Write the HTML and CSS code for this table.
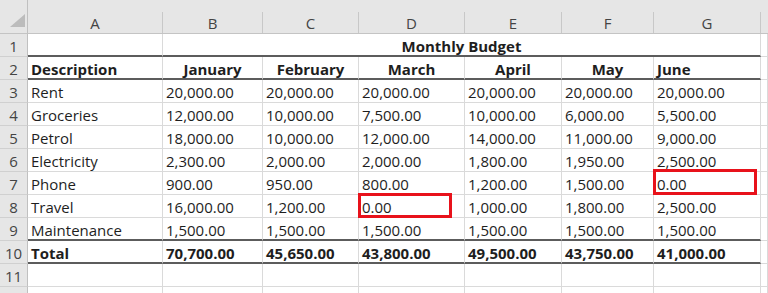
FILE: index.html
```html
<!DOCTYPE html>
<html>
<head>
<meta charset="utf-8">
<link rel="stylesheet" href="styles.css">
</head>
<body>
<div class="sheet">
  <div class="ch corner"><span class="tri"></span></div>
  <div class="ch"><span class="lbl">A</span></div>
  <div class="ch"><span class="lbl">B</span></div>
  <div class="ch"><span class="lbl">C</span></div>
  <div class="ch"><span class="lbl">D</span></div>
  <div class="ch"><span class="lbl">E</span></div>
  <div class="ch"><span class="lbl">F</span></div>
  <div class="ch"><span class="lbl">G</span></div>
  <div class="ch"><span class="lbl last"></span></div>

  <div class="rh">1</div>
  <div class="c thick"></div>
  <div class="c thick b merged">Monthly Budget</div>
  <div class="c"></div>

  <div class="rh">2</div>
  <div class="c thick b">Description</div>
  <div class="c thick b ctr">January</div>
  <div class="c thick b ctr">February</div>
  <div class="c thick b ctr">March</div>
  <div class="c thick b ctr">April</div>
  <div class="c thick b ctr">May</div>
  <div class="c thick b">June</div>
  <div class="c"></div>

  <div class="rh">3</div>
  <div class="c">Rent</div><div class="c">20,000.00</div><div class="c">20,000.00</div><div class="c">20,000.00</div><div class="c">20,000.00</div><div class="c">20,000.00</div><div class="c">20,000.00</div><div class="c"></div>

  <div class="rh">4</div>
  <div class="c">Groceries</div><div class="c">12,000.00</div><div class="c">10,000.00</div><div class="c">7,500.00</div><div class="c">10,000.00</div><div class="c">6,000.00</div><div class="c">5,500.00</div><div class="c"></div>

  <div class="rh">5</div>
  <div class="c">Petrol</div><div class="c">18,000.00</div><div class="c">10,000.00</div><div class="c">12,000.00</div><div class="c">14,000.00</div><div class="c">11,000.00</div><div class="c">9,000.00</div><div class="c"></div>

  <div class="rh">6</div>
  <div class="c">Electricity</div><div class="c">2,300.00</div><div class="c">2,000.00</div><div class="c">2,000.00</div><div class="c">1,800.00</div><div class="c">1,950.00</div><div class="c">2,500.00</div><div class="c"></div>

  <div class="rh">7</div>
  <div class="c">Phone</div><div class="c">900.00</div><div class="c">950.00</div><div class="c">800.00</div><div class="c">1,200.00</div><div class="c">1,500.00</div><div class="c hl">0.00<span class="mark mark-g"></span></div><div class="c"></div>

  <div class="rh">8</div>
  <div class="c">Travel</div><div class="c">16,000.00</div><div class="c">1,200.00</div><div class="c hl">0.00<span class="mark mark-d"></span></div><div class="c">1,000.00</div><div class="c">1,800.00</div><div class="c">2,500.00</div><div class="c"></div>

  <div class="rh">9</div>
  <div class="c thick">Maintenance</div><div class="c thick">1,500.00</div><div class="c thick">1,500.00</div><div class="c thick">1,500.00</div><div class="c thick">1,500.00</div><div class="c thick">1,500.00</div><div class="c thick">1,500.00</div><div class="c"></div>

  <div class="rh">10</div>
  <div class="c thick b">Total</div><div class="c thick b">70,700.00</div><div class="c thick b">45,650.00</div><div class="c thick b">43,800.00</div><div class="c thick b">49,500.00</div><div class="c thick b">43,750.00</div><div class="c thick b">41,000.00</div><div class="c"></div>

  <div class="rh">11</div>
  <div class="c"></div><div class="c"></div><div class="c"></div><div class="c"></div><div class="c"></div><div class="c"></div><div class="c"></div><div class="c"></div>

  <div class="rh"></div>
  <div class="c"></div><div class="c"></div><div class="c"></div><div class="c"></div><div class="c"></div><div class="c"></div><div class="c"></div><div class="c"></div>
</div>
</body>
</html>
```

FILE: styles.css
```css
html, body {
  margin: 0;
  padding: 0;
  background: #ffffff;
  overflow: hidden;
}

.sheet {
  display: grid;
  grid-template-columns: 28px 135px 100px 96px 106px 97px 92px 107px 1fr;
  grid-template-rows: 34px;
  grid-auto-rows: 23px;
  width: 768px;
  font-family: "Open Sans", "Liberation Sans", sans-serif;
  font-size: 15px;
  color: #1e1e1e;
}

.ch {
  background: #e6e6e6;
  display: flex;
  align-items: flex-end;
  border-bottom: 1px solid #c4c4c4;
  box-sizing: border-box;
}

.ch .lbl {
  display: block;
  width: 100%;
  height: 21px;
  line-height: 22px;
  text-align: center;
  color: #444444;
  border-right: 1px solid #c8c8c8;
  box-sizing: border-box;
}

.ch .lbl.last {
  border-right: none;
}

.corner {
  position: relative;
  border-right: 1px solid #c0c0c0;
}

.tri {
  position: absolute;
  left: 10px;
  top: 14px;
  width: 0;
  height: 0;
  border-left: 15px solid transparent;
  border-bottom: 13px solid #bcbcbc;
}

.rh {
  background: #e6e6e6;
  color: #444444;
  text-align: center;
  padding-top: 1px;
  line-height: 22px;
  border-right: 1px solid #c0c0c0;
  border-bottom: 1px solid #d0d0d0;
  box-sizing: border-box;
}

.c {
  position: relative;
  box-sizing: border-box;
  border-right: 1px solid #dadada;
  border-bottom: 1px solid #dadada;
  padding-left: 3px;
  padding-top: 1px;
  line-height: 22px;
  white-space: nowrap;
}

.c.thick {
  border-bottom: 2px solid #5c5c5c;
}

.b {
  font-weight: 700;
}

.ctr {
  text-align: center;
  padding-left: 0;
}

.merged {
  grid-column: span 6;
  text-align: center;
  padding-left: 0;
}

.mark {
  position: absolute;
  border: 3px solid #e8121b;
  box-sizing: border-box;
}

.mark-d {
  left: -1px;
  top: -2px;
  width: 94px;
  height: 25px;
}

.mark-g {
  left: -1px;
  top: -3px;
  width: 104px;
  height: 26px;
}
```
